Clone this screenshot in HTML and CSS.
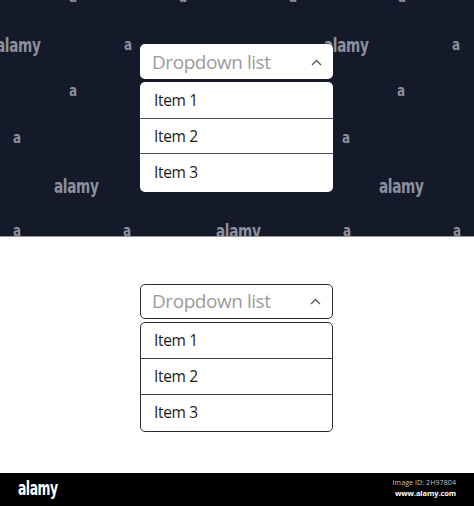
FILE: index.html
```html
<!DOCTYPE html>
<html>
<head>
<meta charset="utf-8">
<link rel="stylesheet" href="styles.css">
</head>
<body>
<div class="page">
  <section class="panel panel-dark">
    <div class="marks">
      <span class="wm wm-big" style="left:-4px;top:36px">alamy</span>
      <span class="wm" style="left:124px;top:38px">a</span>
      <span class="wm wm-big" style="left:324px;top:36px">alamy</span>
      <span class="wm" style="left:452px;top:38px">a</span>
      <span class="wm" style="left:69px;top:84px">a</span>
      <span class="wm" style="left:397px;top:84px">a</span>
      <span class="wm" style="left:13px;top:131px">a</span>
      <span class="wm" style="left:342px;top:131px">a</span>
      <span class="wm wm-big" style="left:54px;top:177px">alamy</span>
      <span class="wm wm-big" style="left:379px;top:177px">alamy</span>
      <span class="wm" style="left:13px;top:224px">a</span>
      <span class="wm" style="left:123px;top:224px">a</span>
      <span class="wm wm-big" style="left:216px;top:222px">alamy</span>
      <span class="wm" style="left:343px;top:224px">a</span>
      <span class="wm" style="left:453px;top:224px">a</span>
      <span class="wm" style="left:69px;top:-10px">a</span>
      <span class="wm" style="left:179px;top:-10px">a</span>
      <span class="wm" style="left:289px;top:-10px">a</span>
      <span class="wm" style="left:398px;top:-10px">a</span>
    </div>
    <div class="dropdown">
      <div class="dd-head">
        <span class="dd-placeholder">Dropdown list</span>
        <svg class="chev" width="11" height="7" viewBox="0 0 11 7"><polyline points="1,6 5.5,1.5 10,6" fill="none" stroke="#555" stroke-width="1.3"/></svg>
      </div>
      <ul class="dd-list">
        <li class="dd-item">Item 1</li>
        <li class="dd-item">Item 2</li>
        <li class="dd-item">Item 3</li>
      </ul>
    </div>
  </section>
  <section class="panel panel-light">
    <div class="dropdown dropdown-outline">
      <div class="dd-head">
        <span class="dd-placeholder">Dropdown list</span>
        <svg class="chev" width="11" height="7" viewBox="0 0 11 7"><polyline points="1,6 5.5,1.5 10,6" fill="none" stroke="#555" stroke-width="1.3"/></svg>
      </div>
      <ul class="dd-list">
        <li class="dd-item">Item 1</li>
        <li class="dd-item">Item 2</li>
        <li class="dd-item">Item 3</li>
      </ul>
    </div>
  </section>
  <footer class="footer">
    <span class="logo">alamy</span>
    <div class="credit">
      <span class="credit-id">Image ID: 2H97804</span>
      <span class="credit-url">www.alamy.com</span>
    </div>
  </footer>
</div>
</body>
</html>
```

FILE: styles.css
```css
* { box-sizing: border-box; }
html, body { margin: 0; padding: 0; }
body { width: 474px; height: 506px; overflow: hidden; font-family: "Open Sans", "Noto Sans", sans-serif; }
.page { display: flex; flex-direction: column; width: 474px; height: 506px; }

.panel { position: relative; display: flex; flex-direction: column; padding-left: 140px; overflow: hidden; }
.panel-dark { height: 236px; background: #141a2a; padding-top: 44px; }
.panel-light { height: 237px; background: #ffffff; padding-top: 47px; border-top: 1px solid #9a9ca3; }

.marks { position: absolute; inset: 0; pointer-events: none; }
.wm { position: absolute; font-family: "DejaVu Sans", sans-serif; font-weight: bold; font-size: 15px; color: #8c909b; transform: scaleX(0.8); transform-origin: left top; line-height: 1; }
.wm-big { font-size: 19px; letter-spacing: -0.5px; transform: scaleX(0.72); }

.dropdown { position: relative; width: 193px; display: flex; flex-direction: column; gap: 3px; }
.dd-head { height: 35px; background: #fff; border-radius: 5px; display: flex; align-items: center; justify-content: space-between; padding: 0 11px 0 12px; }
.dd-placeholder { font-size: 19px; letter-spacing: -0.45px; color: #9b9b9b; }
.chev { display: block; margin-top: 1px; }

.dd-list { list-style: none; margin: 0; padding: 0; background: #fff; border-radius: 5px; display: flex; flex-direction: column; overflow: hidden; }
.dd-item { height: 35.5px; display: flex; align-items: center; padding-left: 14px; font-size: 15.5px; letter-spacing: -0.35px; color: #1b1b1b; }
.dd-item + .dd-item { border-top: 1px solid #4e4e52; }
.dd-item:last-child { height: 38.5px; padding-bottom: 2px; }

.dropdown-outline .dd-head { border: 1.5px solid #2b2b30; height: 34.5px; padding-left: 11px; }
.dropdown-outline .dd-list { border: 1.5px solid #2b2b30; }
.dropdown-outline .dd-item { padding-left: 13px; }
.dropdown-outline .dd-item + .dd-item { border-top: 1px solid #3a3a3e; }
.dropdown-outline .dd-item:last-child { height: 37.5px; }

.footer { height: 33px; background: #000; display: flex; align-items: center; justify-content: space-between; padding: 0 18px 0 18px; }
.logo { font-family: "DejaVu Sans", sans-serif; font-weight: bold; font-size: 20px; letter-spacing: -0.8px; color: #fff; transform: scaleX(0.62); transform-origin: left center; line-height: 1; margin-top: -4px; }
.credit { display: flex; flex-direction: column; align-items: flex-end; gap: 1px; margin-top: -3px; }
.credit-id { font-size: 7px; line-height: 9px; color: #c8c8c8; letter-spacing: 0.1px; }
.credit-url { font-size: 7.5px; line-height: 10px; font-weight: bold; color: #fff; letter-spacing: -0.1px; }
```
